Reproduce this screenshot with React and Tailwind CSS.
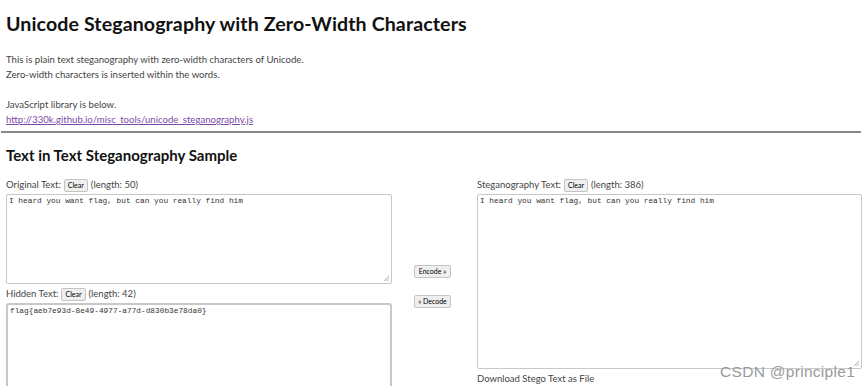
import React from 'react';

const SmallButton = ({ children, className = '' }) => (
  <button
    className={`h-[13px] px-[3px] bg-[#efefef] border border-[#c4c4c4] rounded-[2px] text-[7px] leading-none text-black whitespace-nowrap align-middle ${className}`}
  >
    {children}
  </button>
);

const Label = ({ name, length }) => (
  <div className="h-[18px] flex items-center gap-[3px] text-[9.5px] text-[#444]">
    <span>{name}:</span>
    <SmallButton>Clear</SmallButton>
    <span>(length: {length})</span>
  </div>
);

const Area = ({ text, className = '' }) => (
  <div
    className={`relative border border-[#c8c8c8] rounded-[2px] bg-white px-[2px] py-[1px] font-['Liberation_Mono',monospace] text-[7.8px] text-[#333] leading-[11px] ${className}`}
  >
    {text}
    <svg className="absolute right-[1px] bottom-[1px]" width="7" height="7" viewBox="0 0 7 7">
      <path d="M6 1 L1 6 M6 3.5 L3.5 6 M6 5.5 L5.5 6" stroke="#9a9a9a" strokeWidth="0.8" />
    </svg>
  </div>
);

export default function App() {
  return (
    <div className="relative w-[865px] h-[386px] overflow-hidden bg-white font-['Lato','Noto_Sans_CJK_JP',sans-serif]">
      <div className="pl-[6px] pr-[4px]">
        <h1 className="pt-[10px] text-[19.6px] font-bold text-[#111] leading-[28px] tracking-[0.1px]">
          Unicode Steganography with Zero-Width Characters
        </h1>
        <div className="mt-[14px] text-[9.6px] leading-[15px] text-[#444]">
          <p>This is plain text steganography with zero-width characters of Unicode.</p>
          <p>Zero-width characters is inserted within the words.</p>
          <p className="mt-[15px]">JavaScript library is below.</p>
          <p>
            <a href="#" className="text-[#7b4aa8] underline">
              http://330k.github.io/misc_tools/unicode_steganography.js
            </a>
          </p>
        </div>
      </div>
      <hr className="mt-[4px] ml-[1px] w-[860px] border-0 border-t-2 border-[#8a8a8a]" />
      <div className="pl-[6px]">
        <h2 className="mt-[12px] text-[15px] font-bold text-[#111] leading-[20px]">
          Text in Text Steganography Sample
        </h2>
        <div className="mt-[11px] flex">
          <div className="w-[386px] flex flex-col">
            <Label name="Original Text" length={50} />
            <Area className="h-[90px]" text="I heard you want flag, but can you really find him" />
            <div className="mt-[1px]">
              <Label name="Hidden Text" length={42} />
            </div>
            <Area
              className="h-[100px] border-[#5b9be0] border-2 rounded-[3px]"
              text="flag{aeb7e93d-8e49-4977-a77d-d830b3e78da0}"
            />
          </div>
          <div className="w-[85px] flex flex-col items-start pl-[22px] pt-[89px] gap-[17px]">
            <SmallButton className="w-[37px]">Encode »</SmallButton>
            <SmallButton className="w-[37px]">« Decode</SmallButton>
          </div>
          <div className="w-[385px] flex flex-col">
            <Label name="Steganography Text" length={386} />
            <Area className="h-[175px]" text="I heard you want flag, but can you really find him" />
            <div className="mt-[4px] text-[9.5px] text-[#444] leading-[12px]">Download Stego Text as File</div>
          </div>
        </div>
      </div>
      <div className="absolute left-[720px] top-[360px] text-[15.5px] text-[#9a9a9a] font-['Liberation_Sans',sans-serif] tracking-[0.3px]">
        CSDN @principle1
      </div>
    </div>
  );
}
